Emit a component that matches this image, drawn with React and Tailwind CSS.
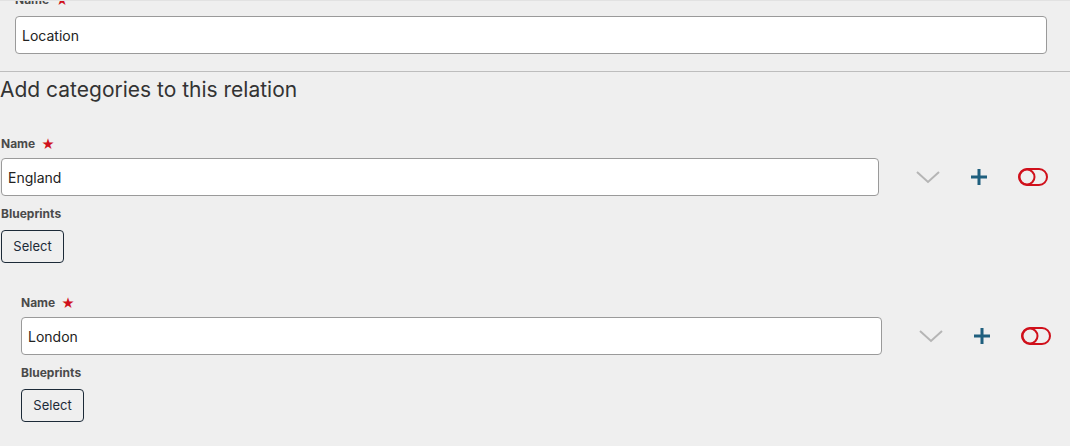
import React from 'react';

const Chevron = () => (
  <svg width="24" height="14" viewBox="0 0 24 14" fill="none">
    <path d="M1 2l11 10L23 2" stroke="#b5b5b5" strokeWidth="2" />
  </svg>
);

const Plus = () => (
  <svg width="16" height="16" viewBox="0 0 16 16" fill="none">
    <path d="M8 0v16M0 8h16" stroke="#1f5f7e" strokeWidth="3" />
  </svg>
);

const Toggle = () => (
  <svg width="30" height="18" viewBox="0 0 30 18" fill="none">
    <rect x="1" y="1" width="28" height="16" rx="8" stroke="#d0101b" strokeWidth="2" />
    <circle cx="9" cy="9" r="7.5" stroke="#d0101b" strokeWidth="2" />
  </svg>
);

const Label = ({ children, required }) => (
  <div className="flex items-center gap-[6px] h-4 text-[12px] leading-4 font-bold text-[#4a4a4a]">
    <span>{children}</span>
    {required && <span className="text-[#d0101b] text-[13px]">★</span>}
  </div>
);

const TextInput = ({ value, className = '' }) => (
  <div className={`h-[38px] bg-white border border-[#9a9a9a] rounded-[4px] flex items-center px-[6px] text-[14px] text-[#222] ${className}`}>
    {value}
  </div>
);

const Category = ({ name, className }) => (
  <div className={className}>
    <Label required>Name</Label>
    <div className="flex items-center mt-[6px]">
      <TextInput value={name} className="flex-1" />
      <div className="flex items-center ml-[37px]">
        <Chevron />
        <div className="ml-[31px] flex"><Plus /></div>
        <div className="ml-[31px] flex"><Toggle /></div>
      </div>
    </div>
    <div className="mt-[10px]">
      <Label>Blueprints</Label>
    </div>
    <button className="mt-[8px] h-[33px] w-[63px] border border-[#1c2a38] rounded-[4px] text-[13px] text-[#1c2a38] bg-transparent">
      Select
    </button>
  </div>
);

export default function App() {
  return (
    <div
      className="w-full h-[446px] bg-[#efefef] overflow-hidden border-t border-[#e2e2e2]"
      style={{ fontFamily: 'Inter, "Open Sans", sans-serif' }}
    >
      <div className="pl-[15px] pr-[23px] mt-[-9px] pb-[17px] border-b border-[#bdbdbd]">
        <Label required>Name</Label>
        <TextInput value="Location" className="mt-[8px]" />
      </div>
      <h2 className="mt-[4px] text-[21px] leading-7 text-[#333] font-normal">Add categories to this relation</h2>
      <Category name="England" className="pl-[1px] pr-[22px] mt-[32px]" />
      <Category name="London" className="pl-[21px] pr-[19px] mt-[32px]" />
    </div>
  );
}
